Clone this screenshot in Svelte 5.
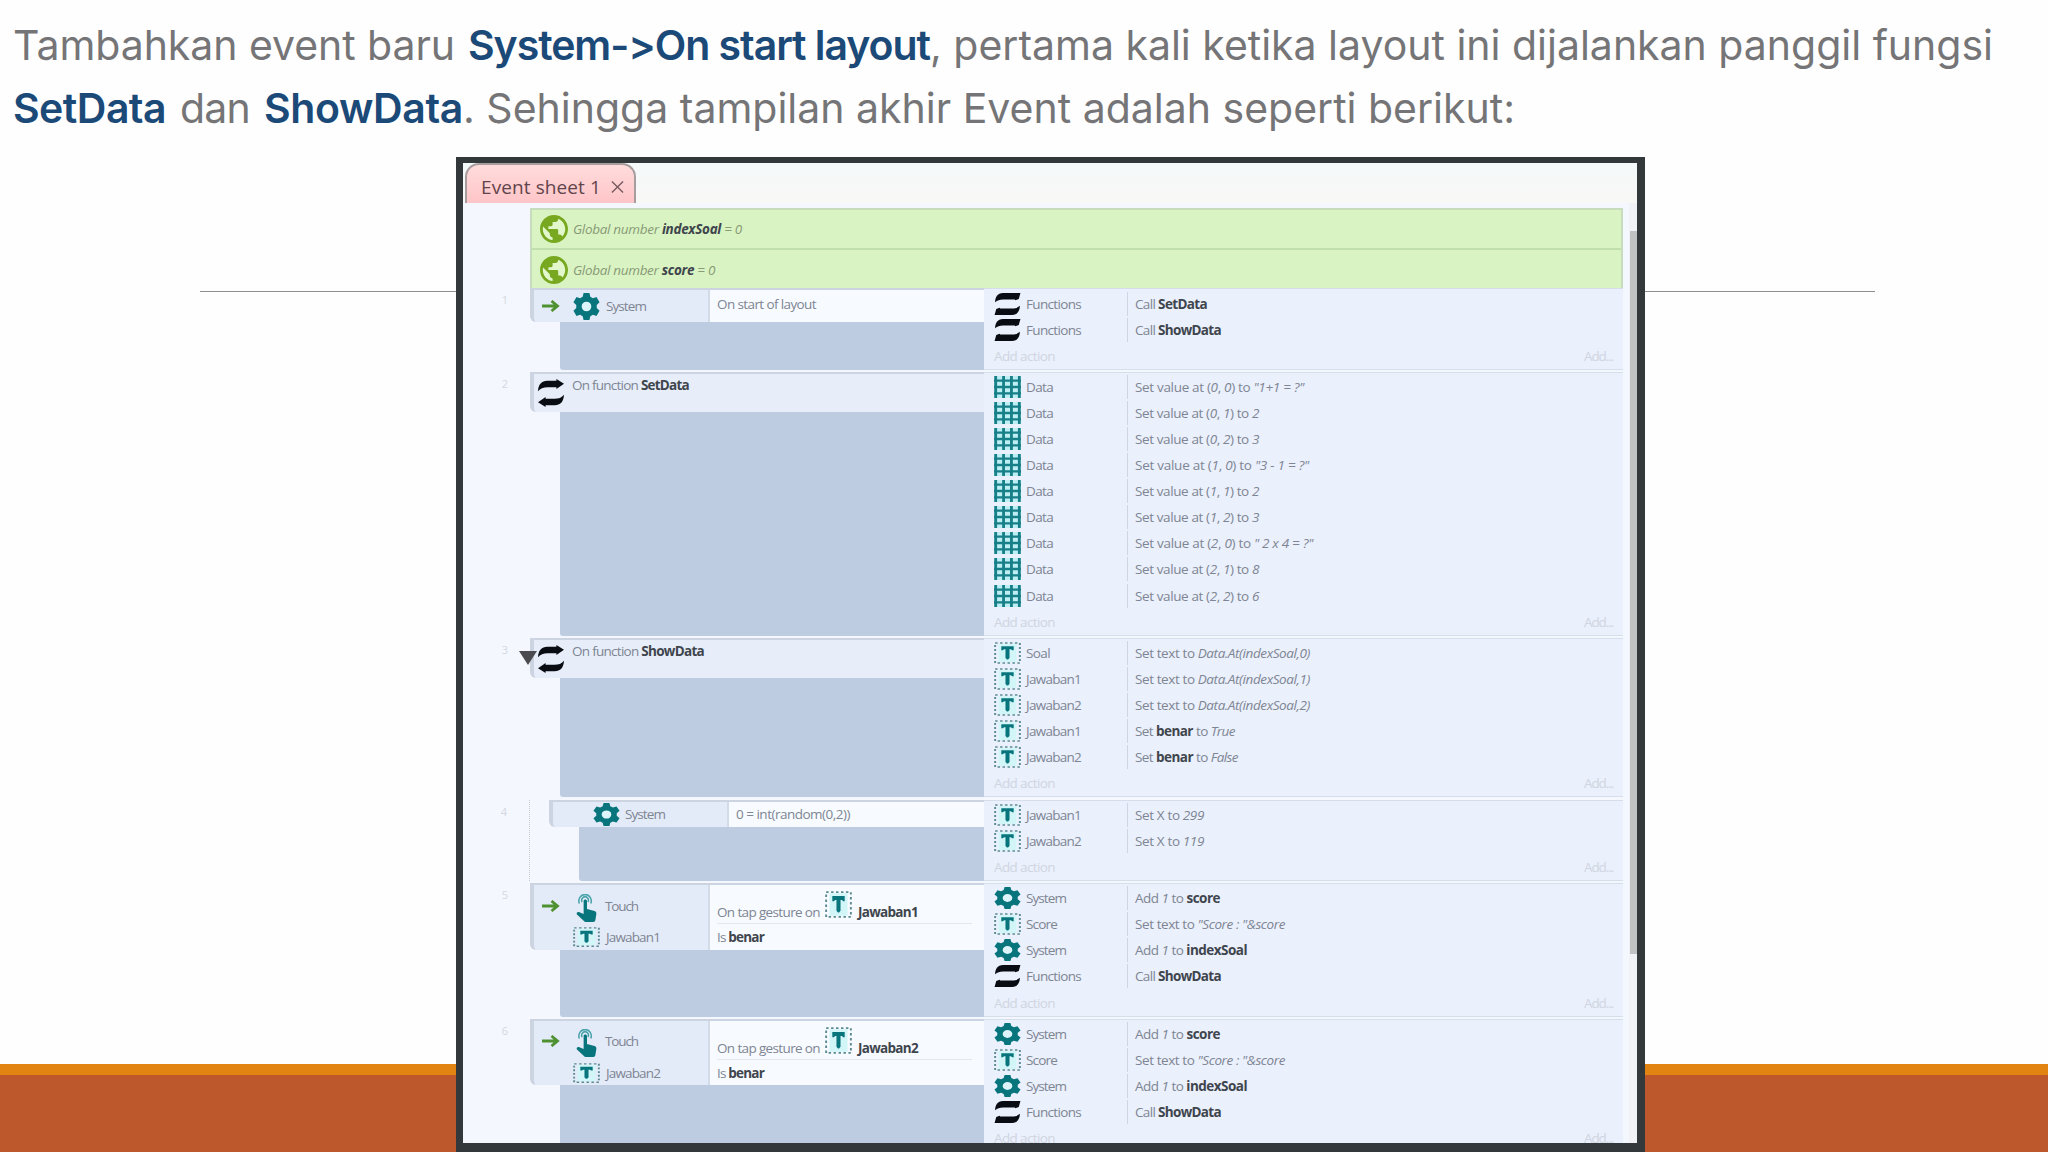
<script>
  const heading = [
    [
      { text: 'Tambahkan event baru', w: 442 },
      { text: 'System->On start layout', w: 462, bold: true, gap: 13 },
      { text: ', pertama kali ketika layout ini dijalankan panggil fungsi', w: 1063 }
    ],
    [
      { text: 'SetData', w: 153, bold: true },
      { text: 'dan', w: 70, gap: 14 },
      { text: 'ShowData', w: 199, bold: true, gap: 14 },
      { text: '. Sehingga tampilan akhir Event adalah seperti berikut:', w: 1052, gap: 0 }
    ]
  ];

  const globals = [
    { text: 'Global number |*indexSoal|_ = 0', w: 169 },
    { text: 'Global number |*score|_ = 0', w: 142 }
  ];

  // text markers: parts split on "|", "*" = bold, "_" = italic
  const touchActions = [
    ['gear', 'System', 40, 'Add |_1| to |*score', 85],
    ['text', 'Score', 31, 'Set text to |_"Score : "&score', 150],
    ['gear', 'System', 40, 'Add |_1| to |*indexSoal', 112],
    ['func', 'Functions', 55, 'Call |*ShowData', 86]
  ];

  const events = [
    {
      n: 1,
      kind: 'single',
      actions: [
        ['func', 'Functions', 55, 'Call |*SetData', 72],
        ['func', 'Functions', 55, 'Call |*ShowData', 86]
      ]
    },
    {
      n: 2,
      kind: 'function',
      name: 'SetData',
      w: 117,
      actions: [
        ['grid', 'Data', 27, 'Set value at (|_0|, |_0|) to |_"1+1 = ?"', 169],
        ['grid', 'Data', 27, 'Set value at (|_0|, |_1|) to |_2', 124],
        ['grid', 'Data', 27, 'Set value at (|_0|, |_2|) to |_3', 124],
        ['grid', 'Data', 27, 'Set value at (|_1|, |_0|) to |_"3 - 1 = ?"', 174],
        ['grid', 'Data', 27, 'Set value at (|_1|, |_1|) to |_2', 124],
        ['grid', 'Data', 27, 'Set value at (|_1|, |_2|) to |_3', 124],
        ['grid', 'Data', 27, 'Set value at (|_2|, |_0|) to |_" 2 x 4 = ?"', 178],
        ['grid', 'Data', 27, 'Set value at (|_2|, |_1|) to |_8', 124],
        ['grid', 'Data', 27, 'Set value at (|_2|, |_2|) to |_6', 124]
      ]
    },
    {
      n: 3,
      kind: 'function',
      name: 'ShowData',
      w: 132,
      open: true,
      actions: [
        ['text', 'Soal', 24, 'Set text to |_Data.At(indexSoal,0)', 175],
        ['text', 'Jawaban1', 55, 'Set text to |_Data.At(indexSoal,1)', 175],
        ['text', 'Jawaban2', 55, 'Set text to |_Data.At(indexSoal,2)', 175],
        ['text', 'Jawaban1', 55, 'Set |*benar| to |_True', 100],
        ['text', 'Jawaban2', 55, 'Set |*benar| to |_False', 103]
      ]
    },
    {
      n: 4,
      kind: 'sub',
      actions: [
        ['text', 'Jawaban1', 55, 'Set X to |_299', 69],
        ['text', 'Jawaban2', 55, 'Set X to |_119', 69]
      ]
    },
    { n: 5, kind: 'touch', target: 'Jawaban1', actions: touchActions },
    { n: 6, kind: 'touch', target: 'Jawaban2', actions: touchActions }
  ];

  // spread the letters so that the text takes exactly the given width
  function fit(node, width) {
    const count = node.textContent.length;
    const natural = node.getBoundingClientRect().width;
    node.style.letterSpacing = (width - natural) / count + 'px';
  }
</script>

{#snippet icon(name)}
  {#if name === 'gear'}
    <svg class="icon" viewBox="0 0 24 24" preserveAspectRatio="none">
      <circle cx="12" cy="12" r="5" fill="#dcf4fa" />
      <path fill="#08757d" fill-rule="evenodd" d="M9.400 0h5.200l.8 3.300 2.300 1.300 3.200-1 2.700 4.600-2.500 2.400v2.800l2.500 2.400-2.700 4.600-3.200-1-2.300 1.300-.8 3.300H9.400l-.8-3.300-2.300-1.300-3.200 1L.4 15.800l2.500-2.400v-2.800L.4 8.200l2.700-4.600 3.200 1 2.300-1.300zM12 7.700a4.300 4.300 0 1 0 0 8.600 4.300 4.300 0 0 0 0-8.600z" />
    </svg>
  {:else if name === 'func'}
    <svg class="icon" viewBox="0 0 24 24" preserveAspectRatio="none">
      <path fill="#090c12" d="M0 10.500C.3 4.500 3.500 1.500 8.500 1.500H17V0l7 4-7 4.500V7H9C5 7 2 8 0 10.500z" />
      <path fill="#090c12" d="M24 13.500c-.3 6-3.500 9-8.500 9H7V24l-7-4 7-4.500V17h8c4 0 7-1 9-3.500z" />
    </svg>
  {:else if name === 'funcSmall'}
    <svg class="icon" viewBox="0 0 24 24" preserveAspectRatio="none">
      <path fill="#090c12" d="M1 10C1 5 3 0 8 0h15.500l-1.500 6.500-3 1.500-.5-1H8C5 7 3 8 1 10z" />
      <path fill="#090c12" d="M23 14c0 5-2 10-7 10H.5L2 17.500 5 16l.5 1H16c3 0 5-1 7-3z" />
    </svg>
  {:else if name === 'grid'}
    <svg class="icon" viewBox="0 0 24 24" preserveAspectRatio="none">
      <rect width="24" height="24" fill="#bdeef4" />
      <path fill="none" stroke="#177f87" stroke-width="2.500" d="M1.500 0v24M8.500 0v24M15.500 0v24M22.500 0v24M0 5h24M0 12h24M0 19h24" />
    </svg>
  {:else if name === 'text'}
    <svg class="icon" viewBox="0 0 24 24" preserveAspectRatio="none">
      <rect x="4" y="2" width="16" height="20" fill="#d2f5f8" />
      <rect x="1" y="1" width="22" height="22" fill="none" stroke="#5d8b92" stroke-width="1.700" stroke-dasharray="2.200 2.200" />
      <path fill="#08757d" d="M6.500 4.500h11V9h-1.300L15 8h-1.200v9.500L12.500 19h-1l-1.300-1.500V8H9L7.800 9H6.500z" />
    </svg>
  {:else if name === 'touch'}
    <svg class="icon" viewBox="0 0 22 28" preserveAspectRatio="none">
      <path fill="none" stroke="#4aa3ab" stroke-width="1.600" d="M3.500 9.500a6.500 6.500 0 1 1 12 0M6.500 8a3.500 3.500 0 1 1 6 0" />
      <path fill="#08757d" d="M8 7c0-2 3.500-2 3.500 0v8l8 2c1.500.5 2 1.500 1.800 3l-1 6c-.2 1.300-1 2-2.300 2h-7.500c-1 0-1.500-.3-2.200-1L1 20.500C0 19 1.500 17.500 3 18l5 2z" />
    </svg>
  {:else if name === 'globe'}
    <svg class="icon" viewBox="2 2 20 20">
      <circle cx="12" cy="12" r="9" fill="#e2f7cb" />
      <path fill="#78a820" d="M12 2C6.480 2 2 6.480 2 12s4.480 10 10 10 10-4.480 10-10S17.520 2 12 2zm-1 17.930c-3.950-.49-7-3.850-7-7.930 0-.62.08-1.210.21-1.790L9 15v1c0 1.100.9 2 2 2v1.930zm6.900-2.540c-.26-.81-1-1.390-1.900-1.390h-1v-3c0-.55-.45-1-1-1H8v-2h2c.55 0 1-.45 1-1V7h2c1.100 0 2-.9 2-2v-.41c2.930 1.190 5 4.060 5 7.410 0 2.080-.8 3.970-2.100 5.390z" />
    </svg>
  {:else if name === 'arrow'}
    <svg class="icon" viewBox="0 0 18 12">
      <path fill="none" stroke="#4e9130" stroke-width="2.800" d="M0 6h15M9.500 1l6 5-6 5" />
    </svg>
  {/if}
{/snippet}

{#snippet rich(value, w)}
  <span class="rich" use:fit={w}>{#each value.split('|') as part}{#if part[0] === '*'}<b>{part.slice(1)}</b>{:else if part[0] === '_'}<i>{part.slice(1)}</i>{:else}{part}{/if}{/each}</span>
{/snippet}

<div class="slide">
  <div class="band"></div>
  <div class="rule"></div>

  <div class="content">
    <header>
      {#each heading as line}
        <p>{#each line as seg}<span class="seg" class:bold={seg.bold} style="margin-left: {seg.gap ?? 0}px" use:fit={seg.w}>{seg.text}</span>{/each}</p>
      {/each}
    </header>

    <section class="frame">
      <div class="tabs">
        <div class="tab">
          {@render rich('Event sheet 1', 120)}
          <svg class="close" viewBox="0 0 14 14"><path d="M1 1l12 12M13 1L1 13" /></svg>
        </div>
      </div>

      <div class="body">
        <div class="sheet">
          <div class="globals">
            {#each globals as g}
              <div class="global">
                <span class="globe">{@render icon('globe')}</span>
                <em>{@render rich(g.text, g.w)}</em>
              </div>
            {/each}
          </div>

          {#each events as ev}
            <div class="event {ev.kind}">
              <div class="num">{ev.n}</div>
              <div class="left">
                <div class="cond">
                  {#if ev.kind === 'function'}
                    <span class="fn-icon">{@render icon('func')}</span>
                    <span class="fn-text">{@render rich('On function |*' + ev.name, ev.w)}</span>
                  {:else if ev.kind === 'touch'}
                    <div class="object">
                      <div class="line first">
                        <span class="arrow">{@render icon('arrow')}</span>
                        <span class="touch-icon">{@render icon('touch')}</span>
                        {@render rich('Touch', 33)}
                      </div>
                      <div class="line second">
                        <span class="arrow"></span>
                        <span class="obj-icon">{@render icon('text')}</span>
                        {@render rich(ev.target, 54)}
                      </div>
                    </div>
                    <div class="value">
                      <div class="gesture">
                        {@render rich('On tap gesture on', 103)}
                        <span class="target-icon">{@render icon('text')}</span>
                        {@render rich('*' + ev.target, 60)}
                      </div>
                      <div class="is">{@render rich('Is |*benar', 47)}</div>
                    </div>
                  {:else}
                    <div class="object">
                      <div class="line">
                        <span class="arrow">{#if ev.kind === 'single'}{@render icon('arrow')}{/if}</span>
                        <span class="obj-icon">{@render icon('gear')}</span>
                        {@render rich('System', 40)}
                      </div>
                    </div>
                    <div class="value">
                      {#if ev.kind === 'single'}
                        {@render rich('On start of layout', 99)}
                      {:else}
                        {@render rich('0 = int(random(0,2))', 114)}
                      {/if}
                    </div>
                  {/if}
                </div>
                <div class="fill"></div>
                {#if ev.open}<span class="triangle"></span>{/if}
              </div>
              <div class="actions">
                {#each ev.actions as [ic, name, nw, text, tw]}
                  <div class="action">
                    <span class="act-icon">{@render icon(ic === 'func' ? 'funcSmall' : ic)}</span>
                    <span class="act-name">{@render rich(name, nw)}</span>
                    <span class="act-text">{@render rich(text, tw)}</span>
                  </div>
                {/each}
                <div class="action add">
                  {@render rich('Add action', 61)}
                  {@render rich('Add...', 29)}
                </div>
              </div>
            </div>
          {/each}
        </div>
        <div class="scroll"><div class="thumb"></div></div>
      </div>
    </section>
  </div>
</div>

<style>
  :global(body) {
    margin: 0;
    background: #fff;
  }

  .slide {
    position: relative;
    width: 2048px;
    height: 1152px;
    overflow: hidden;
    background: #fefefe;
    font-family: 'Open Sans', 'Noto Sans', sans-serif;
  }

  /* slide decoration that lies behind the content */
  .band {
    position: absolute;
    inset: auto 0 0 0;
    height: 77px;
    background: #bc582c;
    border-top: 11px solid #e28412;
  }

  .rule {
    position: absolute;
    top: 291px;
    left: 200px;
    width: 1675px;
    height: 1px;
    background: #8f8f8f;
  }

  .content {
    position: relative;
  }

  header {
    height: 157px;
    padding: 14px 0 0 13px;
    box-sizing: border-box;
    font-family: Inter, 'Liberation Sans', sans-serif;
    font-size: 41px;
    font-feature-settings: 'calt' 0;
    font-variant-ligatures: none;
    color: #757577;
  }

  header p {
    margin: 0;
    height: 62.5px;
    line-height: 62.5px;
    white-space: nowrap;
  }

  .seg {
    display: inline-block;
    white-space: pre;
    font-weight: 400;
  }

  .seg.bold {
    font-weight: 600;
    color: #1c4a78;
  }

  .frame {
    width: 1189px;
    height: 1000px;
    margin-left: 456px;
    box-sizing: border-box;
    border: solid #33383a;
    border-width: 6px 8px 14px 7px;
    background: #f4f7fe;
    overflow: hidden;
    display: flex;
    flex-direction: column;
  }

  .tabs {
    height: 40px;
    flex: none;
    padding-left: 2px;
    background: linear-gradient(#f5f9fa, #f8f8f6);
  }

  .tab {
    display: flex;
    align-items: center;
    width: 171px;
    height: 40px;
    padding: 6px 0 0 14px;
    box-sizing: border-box;
    border: 2px solid #a79c9e;
    border-bottom: 0;
    border-radius: 14px 14px 0 0;
    background: linear-gradient(#ffdcdc, #ffc5c8);
    font-size: 19px;
    color: #62444c;
  }

  .close {
    width: 13px;
    height: 14px;
    margin-left: 10px;
    fill: none;
    stroke: #765a61;
    stroke-width: 1.5;
  }

  .body {
    flex: 1;
    min-height: 0;
    display: flex;
    font-size: 13.5px;
    line-height: 18px;
    color: #7e8593;
  }

  .sheet {
    width: 1160px;
    padding-top: 5px;
  }

  .globals {
    width: 1093px;
    height: 80px;
    margin-left: 67px;
    box-sizing: border-box;
    border: 2px solid #c6dcbd;
    border-bottom: 0;
    background: #d9f4c2;
  }

  .global {
    display: flex;
    align-items: center;
    height: 38px;
    box-sizing: border-box;
    padding: 0 0 0 8px;
    color: #899a78;
  }

  .global + .global {
    border-top: 2px solid #c0dfac;
    height: 41px;
  }

  .globe {
    width: 28px;
    height: 28px;
    margin-right: 5px;
  }

  .icon {
    display: block;
    width: 100%;
    height: 100%;
  }

  .rich {
    display: inline-block;
    white-space: pre;
  }

  .rich b {
    font-weight: 700;
    color: #40454d;
  }

  .event {
    display: flex;
    margin-bottom: 2.2px;
  }

  .event.single {
    margin-bottom: 1.5px;
  }

  .num {
    width: 67px;
    padding: 3px 22px 0 0;
    box-sizing: border-box;
    text-align: right;
    font-size: 11px;
    color: #d3d7e2;
  }

  .left {
    position: relative;
    width: 454px;
    display: flex;
    flex-direction: column;
  }

  .cond {
    display: flex;
    box-sizing: border-box;
    height: 34px;
    border: solid #ccd3e1;
    border-width: 2px 0 0 4px;
    border-radius: 0 0 0 6px;
    background: #e4ebf8;
  }

  .fill {
    flex: 1;
    margin-left: 30px;
    background: #becce2;
    border-radius: 0 0 0 3px;
  }

  .function .cond {
    height: 40px;
    background: #e7eefa;
  }

  .fn-icon {
    width: 26px;
    height: 28px;
    margin: 5px 8px 0 4px;
  }

  .fn-text {
    padding-top: 2px;
  }

  .triangle {
    position: absolute;
    left: -11px;
    top: 13px;
    border: solid transparent;
    border-width: 14px 9px 0;
    border-top-color: #4b4b4f;
  }

  .object {
    width: 176px;
    border-right: 2px solid #d3dbe9;
    box-sizing: border-box;
  }

  .line {
    display: flex;
    align-items: center;
    height: 32px;
  }

  .arrow {
    width: 18px;
    height: 12px;
    margin: 0 13px 0 8px;
  }

  .obj-icon {
    width: 27px;
    height: 27px;
    margin-right: 6px;
  }

  .value {
    flex: 1;
    padding: 5px 0 0 7px;
    background: #f7fbff;
  }

  .sub .left {
    width: 435px;
    margin-left: 19px;
  }

  .sub .num {
    border-right: 1px dotted #c3cad8;
  }

  .sub .cond {
    height: 27px;
  }

  .sub .line {
    height: 25px;
  }

  .sub .obj-icon {
    height: 23px;
    margin-right: 5px;
    margin-left: 1px;
  }

  .sub .value {
    padding-top: 3px;
  }

  .touch .cond {
    height: 66.5px;
  }

  .touch .line.first {
    height: 41px;
  }

  .touch .line.second {
    height: 22px;
  }

  .touch .second .obj-icon {
    height: 20px;
  }

  .touch-icon {
    width: 21px;
    height: 28px;
    margin: 4px 8px 0 3px;
  }

  .touch .value {
    padding: 0 0 0 7px;
  }

  .gesture {
    display: flex;
    align-items: flex-end;
    height: 39px;
    padding-bottom: 2px;
    margin-right: 12px;
    box-sizing: border-box;
    border-bottom: 1px solid #e2e8ee;
  }

  .target-icon {
    width: 27px;
    height: 27px;
    margin: 0 6px 3px 5px;
  }

  .is {
    padding-top: 4px;
  }

  .actions {
    width: 639px;
    box-sizing: border-box;
    padding: 1px 0 0 10px;
    border-top: 1px solid #d7deeb;
    border-bottom: 1px solid #d7deeb;
    background: #eaf0fc;
  }

  .single .actions {
    padding-top: 2px;
  }

  .action {
    display: flex;
    align-items: center;
    height: 26.1px;
  }

  .act-icon {
    width: 27px;
    height: 22px;
    margin-right: 5px;
  }

  .act-name {
    width: 101px;
  }

  .act-text {
    height: 24px;
    padding-left: 7px;
    border-left: 1px solid #cfd5e2;
    line-height: 24px;
  }

  .add {
    justify-content: space-between;
    padding-right: 10px;
    color: #d0d5e1;
  }

  .scroll {
    flex: 1;
    margin-left: 6px;
    padding-top: 28px;
    background: #f1f2f5;
  }

  .thumb {
    height: 723px;
    margin-left: 1px;
    background: #c1c2c4;
  }
</style>
